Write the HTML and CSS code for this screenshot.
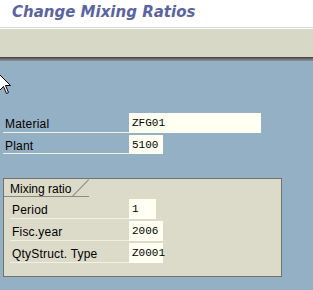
FILE: index.html
```html
<!DOCTYPE html>
<html lang="en">
<head>
  <meta charset="UTF-8" />
  <title>Change Mixing Ratios</title>
  <link rel="stylesheet" href="styles.css">
</head>
<body>
  <div class="screen">
    <!-- Title -->
    <div class="title-bar">
      <h1>Change Mixing Ratios</h1>
    </div>
    <div class="toolbar"></div>
    <div class="toolbar-edge"></div>

    <!-- Main area -->
    <div class="main">
      <svg class="cursor" width="13" height="21" viewBox="0 0 13 21">
        <path d="M0.5 0.5 L0.5 16.5 L4.5 12.5 L7.5 19.5 L9.5 18.5 L6.5 11.5 L11.5 11.5 Z" fill="#fff" stroke="#000" stroke-width="1"/>
      </svg>

      <div class="fields">
        <div class="row">
          <div class="label">Material</div>
          <div class="value wide">ZFG01</div>
        </div>
        <div class="row">
          <div class="label">Plant</div>
          <div class="value">5100</div>
        </div>
      </div>

      <div class="group">
        <div class="group-head">
          <span class="tab">Mixing ratio</span>
        </div>
        <div class="group-body">
          <div class="row">
            <div class="label">Period</div>
            <div class="value short">1</div>
          </div>
          <div class="row">
            <div class="label">Fisc.year</div>
            <div class="value">2006</div>
          </div>
          <div class="row">
            <div class="label">QtyStruct. Type</div>
            <div class="value">Z0001</div>
          </div>
        </div>
      </div>
    </div>
  </div>
</body>
</html>
```

FILE: styles.css
```css
* { margin: 0; padding: 0; box-sizing: border-box; }
body {
  font-family: "Liberation Sans", Arial, sans-serif;
  background-color: #94b0c4;
  width: 313px;
  height: 290px;
  overflow: hidden;
}

.screen {
  display: flex;
  flex-direction: column;
  height: 290px;
}

.title-bar {
  height: 28px;
  background-color: #fff;
  border-bottom: 1px solid #d4d4d4;
  padding: 3px 0 0 12px;
}

.title-bar h1 {
  font-family: "DejaVu Sans", Verdana, sans-serif;
  font-size: 15px;
  font-weight: bold;
  font-style: italic;
  color: #5a64a0;
}

.toolbar {
  height: 29px;
  background-color: #d8d8c6;
  border-top: 1px solid #fff;
}

.toolbar-edge {
  height: 4px;
  background: linear-gradient(#3c3c3c, #5c5c5c 30%, #8a98a0);
}

.main {
  position: relative;
  flex-grow: 1;
  padding: 52px 0 0 3px;
}

.cursor {
  position: absolute;
  left: -1px;
  top: 13px;
}

.row {
  display: flex;
  height: 20px;
  margin-bottom: 2px;
}

.label {
  width: 126px;
  font-size: 12px;
  letter-spacing: 0.2px;
  color: #000;
  padding: 4px 0 0 2px;
  border-bottom: 1px solid #f2f0e0;
}

.value {
  width: 34px;
  background-color: #fffff2;
  font-family: "Liberation Mono", "Courier New", monospace;
  font-size: 11px;
  padding: 4px 0 0 3px;
}

.value.wide { width: 132px; }
.value.short { width: 27px; }

.fields .row:nth-child(2) { height: 19px; }

.group {
  margin-top: 24px;
  width: 279px;
  height: 99px;
  background-color: #dcdac8;
  border: 1px solid #727268;
}

.group-head {
  height: 17px;
}

.tab {
  display: inline-block;
  position: relative;
  height: 17px;
  width: 85px;
  font-size: 12px;
  padding: 2px 0 0 6px;
  border-bottom: 1px solid #8a8a80;
}

.tab::after {
  content: "";
  position: absolute;
  right: 0;
  top: 0;
  width: 1px;
  height: 23px;
  background-color: #8a8a80;
  transform-origin: top right;
  transform: rotate(44deg);
}

.group-body {
  padding: 3px 0 0 6px;
}

.group-body .label {
  width: 119px;
  padding-left: 2px;
}
```
